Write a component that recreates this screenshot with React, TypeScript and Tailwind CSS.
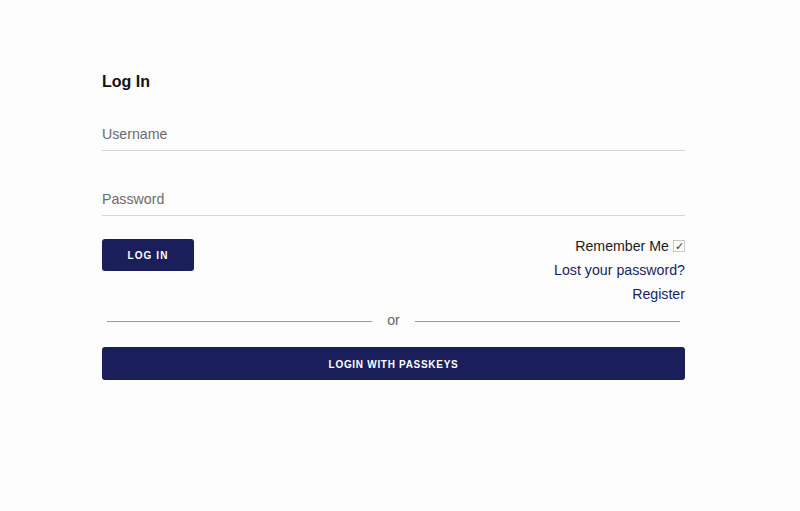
import React from "react";

const font = { fontFamily: '"Liberation Sans", Arial, sans-serif' };

const Field: React.FC<{ label: string; type?: string }> = ({ label, type = "text" }) => (
  <input
    type={type}
    placeholder={label}
    className="block w-full h-[36px] border-b border-[#d4d4d6] bg-transparent pt-[2px] text-[14.2px] text-[#333] placeholder:text-[#6b6b6b] outline-none"
  />
);

export default function App() {
  return (
    <div className="min-h-[511px] w-full bg-[#fdfdfe] text-[#1b1b1b]" style={font}>
      <div className="ml-[102px] w-[583px] pt-[71px]">
        <h2 className="text-[16px] leading-[22px] font-bold text-[#111]">Log In</h2>

        <form className="mt-[22px] flex flex-col" onSubmit={(e) => e.preventDefault()}>
          <Field label="Username" />
          <div className="mt-[29px]">
            <Field label="Password" type="password" />
          </div>

          <div className="mt-[18px] flex items-start justify-between">
            <button
              type="submit"
              className="mt-[5px] h-[32px] w-[92px] rounded-[3px] bg-[#1a1f5c] pt-[1px] text-[10px] font-bold tracking-[1.1px] text-white"
            >
              LOG IN
            </button>
            <div className="flex flex-col items-end text-[14.2px] leading-[24px]">
              <label className="flex items-center gap-[4px] text-[#1b1b1b]">
                Remember Me
                <span className="flex h-[12px] w-[12px] items-center justify-center border border-[#c8c8c8] bg-white text-[11px] leading-none text-[#333]">
                  ✓
                </span>
              </label>
              <a href="#" className="text-[#1a1f5c]">Lost your password?</a>
              <a href="#" className="text-[#1a1f5c]">Register</a>
            </div>
          </div>

          <div className="mt-[5px] flex items-center px-[5px] h-[20px]">
            <div className="h-px flex-1 bg-[#9a9a9a]" />
            <span className="mx-[15px] text-[14.2px] text-[#666]">or</span>
            <div className="h-px flex-1 bg-[#9a9a9a]" />
          </div>

          <button
            type="button"
            className="mt-[16px] h-[33px] w-full rounded-[3px] bg-[#1a1f5c] pt-[1px] text-[10px] font-bold tracking-[0.7px] text-white"
          >
            LOGIN WITH PASSKEYS
          </button>
        </form>
      </div>
    </div>
  );
}
